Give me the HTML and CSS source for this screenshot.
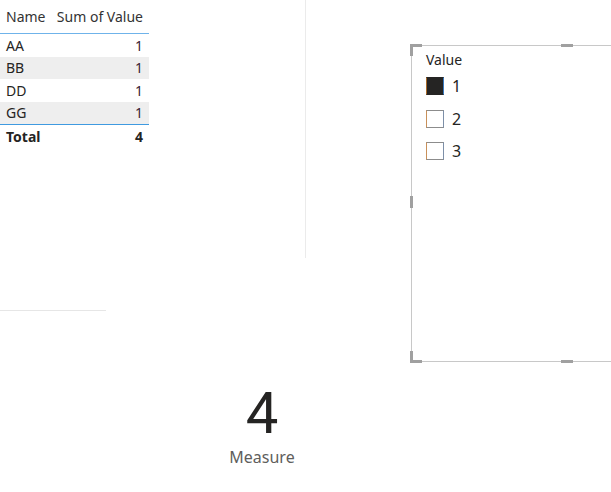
FILE: index.html
```html
<!DOCTYPE html>
<html>
<head>
<meta charset="utf-8">
<link rel="stylesheet" href="styles.css">
</head>
<body>
<div class="canvas">
  <div class="table-visual">
    <div class="row header"><span class="c-name">Name</span><span class="c-val">Sum of Value</span></div>
    <div class="row"><span class="c-name">AA</span><span class="c-val num">1</span></div>
    <div class="row alt"><span class="c-name">BB</span><span class="c-val num">1</span></div>
    <div class="row"><span class="c-name">DD</span><span class="c-val num">1</span></div>
    <div class="row alt last"><span class="c-name">GG</span><span class="c-val num">1</span></div>
    <div class="row total"><span class="c-name">Total</span><span class="c-val">4</span></div>
  </div>

  <div class="vline"></div>
  <div class="hline"></div>

  <div class="slicer">
    <div class="slicer-title">Value</div>
    <div class="slicer-item"><span class="box checked"></span><span>1</span></div>
    <div class="slicer-item"><span class="box"></span><span>2</span></div>
    <div class="slicer-item"><span class="box"></span><span>3</span></div>
    <span class="h-corner tl"></span>
    <span class="h-corner bl"></span>
    <span class="h-mid top"></span>
    <span class="h-mid bottom"></span>
    <span class="h-mid left"></span>
  </div>

  <div class="card">
    <div class="card-value">4</div>
    <div class="card-label">Measure</div>
  </div>
</div>
</body>
</html>
```

FILE: styles.css
```css
html, body {
  margin: 0;
  padding: 0;
  background: #ffffff;
}
.canvas {
  position: relative;
  width: 611px;
  height: 492px;
  overflow: hidden;
  font-family: "Noto Sans", "Open Sans", sans-serif;
  color: #252423;
}

/* table visual */
.table-visual {
  position: absolute;
  left: 0;
  top: 0;
  width: 149px;
  display: flex;
  flex-direction: column;
  font-size: 14px;
}
.row {
  display: flex;
  justify-content: space-between;
  align-items: center;
  height: 22.5px;
  padding: 0 6px 0 6px;
}
.row.header {
  height: 33px;
  border-bottom: 1px solid #6fb3ea;
  color: #333333;
}
.row.alt { background: #eeeeee; }
.row.last { border-bottom: 1px solid #3f9ae0; }
.row.total {
  font-weight: 700;
  height: 23px;
}
.num { color: #3a2234; }

/* separator lines of neighbouring visuals */
.vline {
  position: absolute;
  left: 305px;
  top: 0;
  width: 1px;
  height: 258px;
  background: #ebebeb;
}
.hline {
  position: absolute;
  left: 0;
  top: 310px;
  width: 106px;
  height: 1px;
  background: #e6e6e6;
}

/* slicer */
.slicer {
  position: absolute;
  left: 411px;
  top: 45px;
  width: 310px;
  height: 311px;
  border: 1px solid #c8c8c8;
  padding: 4px 0 0 14px;
  box-sizing: content-box;
  display: flex;
  flex-direction: column;
  font-size: 14px;
}
.slicer-title {
  height: 20px;
  line-height: 20px;
  color: #252423;
}
.slicer-item {
  display: flex;
  align-items: center;
  gap: 8px;
  height: 32.5px;
  font-size: 16px;
  color: #252423;
}
.box {
  width: 16px;
  height: 16px;
  border: 1px solid #8c8c8c;
  border-left-color: #c9915a;
  border-right-color: #7d8fa8;
  background: #ffffff;
  flex: none;
}
.box.checked {
  background: #252423;
  border-color: #252423;
  border-left-color: #a86a2a;
  border-right-color: #3a7ac0;
}
.slicer-item:first-of-type { margin-top: 4px; }

.h-corner {
  position: absolute;
  width: 9px;
  height: 9px;
  border-color: #a0a0a0;
  border-style: solid;
  border-width: 0;
}
.h-corner.tl {
  left: -2px;
  top: -2px;
  border-left-width: 3px;
  border-top-width: 3px;
}
.h-corner.bl {
  left: -2px;
  bottom: -2px;
  border-left-width: 3px;
  border-bottom-width: 3px;
}
.h-mid {
  position: absolute;
  background: #a0a0a0;
}
.h-mid.top { left: 149px; top: -2px; width: 12px; height: 3px; }
.h-mid.bottom { left: 149px; bottom: -2px; width: 12px; height: 3px; }
.h-mid.left { left: -2px; top: 150px; width: 3px; height: 12px; }

/* card */
.card {
  position: absolute;
  left: 162px;
  top: 380px;
  width: 200px;
  display: flex;
  flex-direction: column;
  align-items: center;
}
.card-value {
  font-family: "Roboto", "DejaVu Sans", sans-serif;
  font-weight: 400;
  font-size: 58px;
  line-height: 66px;
  color: #252423;
}
.card-label {
  font-size: 16px;
  line-height: 22px;
  color: #605e5c;
  margin-top: 0;
}
```
